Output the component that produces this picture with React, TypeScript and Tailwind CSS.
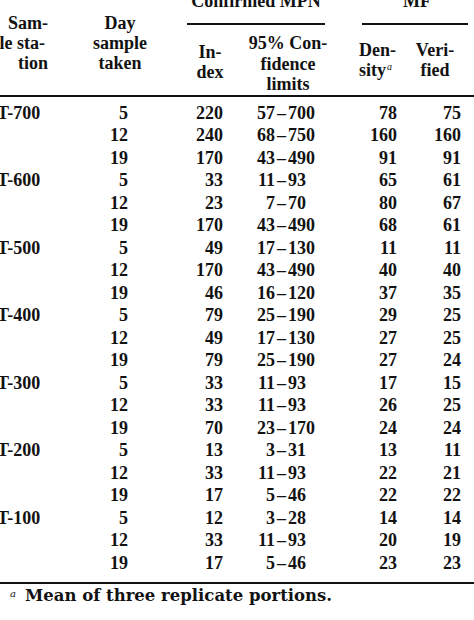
import React from "react";

type Row = [string, string, string, string, string, string, string];

const groups: { st: string; rows: [string, string, string, string, string, string][] }[] = [
  { st: "T-700", rows: [["5", "220", "57", "700", "78", "75"], ["12", "240", "68", "750", "160", "160"], ["19", "170", "43", "490", "91", "91"]] },
  { st: "T-600", rows: [["5", "33", "11", "93", "65", "61"], ["12", "23", "7", "70", "80", "67"], ["19", "170", "43", "490", "68", "61"]] },
  { st: "T-500", rows: [["5", "49", "17", "130", "11", "11"], ["12", "170", "43", "490", "40", "40"], ["19", "46", "16", "120", "37", "35"]] },
  { st: "T-400", rows: [["5", "79", "25", "190", "29", "25"], ["12", "49", "17", "130", "27", "25"], ["19", "79", "25", "190", "27", "24"]] },
  { st: "T-300", rows: [["5", "33", "11", "93", "17", "15"], ["12", "33", "11", "93", "26", "25"], ["19", "70", "23", "170", "24", "24"]] },
  { st: "T-200", rows: [["5", "13", "3", "31", "13", "11"], ["12", "33", "11", "93", "22", "21"], ["19", "17", "5", "46", "22", "22"]] },
  { st: "T-100", rows: [["5", "12", "3", "28", "14", "14"], ["12", "33", "11", "93", "20", "19"], ["19", "17", "5", "46", "23", "23"]] },
];

const rows: Row[] = groups.flatMap((g) =>
  g.rows.map((r, i) => [i === 0 ? g.st : "", ...r] as Row)
);

export default function App() {
  return (
    <div className="w-[474px] h-[620px] overflow-hidden bg-white text-[#121212] font-['Liberation_Serif',serif] font-bold text-[18px]">
      <div className="-mt-[9px] -ml-[12px] w-[486px]">
        {/* Header */}
        <div className="h-[106px] border-b-2 border-[#121212] flex items-start leading-[20px]">
          <div className="w-[72px] pt-[22px] pr-[12px] text-right">
            <div>Sam-</div>
            <div className="pr-[3px]">ple sta-</div>
            <div>tion</div>
          </div>
          <div className="w-[120px] pt-[22px] text-center">
            <div>Day</div>
            <div>sample</div>
            <div>taken</div>
          </div>
          <div className="w-[156px] flex flex-col">
            <div className="ml-[7px] mr-[11px] text-center whitespace-nowrap">Confirmed MPN</div>
            <div className="ml-[7px] mr-[11px] mt-[12px] h-[2px] bg-[#121212]" />
            <div className="flex">
              <div className="w-[60px] mt-[17px] text-center">
                <div>In-</div>
                <div>dex</div>
              </div>
              <div className="w-[96px] mt-[8px] text-center leading-[20.5px] whitespace-nowrap">
                <div>95% Con-</div>
                <div>fidence</div>
                <div>limits</div>
              </div>
            </div>
          </div>
          <div className="w-[138px] flex flex-col">
            <div className="ml-[26px] mr-[6px] pl-[4px] text-center">MF</div>
            <div className="ml-[26px] mr-[6px] mt-[12px] h-[2px] bg-[#121212]" />
            <div className="flex">
              <div className="w-[74px] mt-[15px] pl-[23px]">
                <div>Den-</div>
                <div>
                  sity
                  <sup className="italic font-normal text-[10px] ml-[1px] -top-[6px]">a</sup>
                </div>
              </div>
              <div className="w-[64px] mt-[15px] pr-[14px] text-center">
                <div>Veri-</div>
                <div>fied</div>
              </div>
            </div>
          </div>
        </div>

        {/* Body */}
        <div className="pt-[4.5px] pb-[8px] border-b-2 border-[#121212]">
          {rows.map((r, i) => (
            <div key={i} className="flex h-[22.5px] leading-[22.5px] whitespace-nowrap">
              <div className="w-[72px] pl-[9px]">{r[0]}</div>
              <div className="w-[120px] pr-[52px] text-right">{r[1]}</div>
              <div className="w-[60px] pr-[17px] text-right">{r[2]}</div>
              <div className="w-[96px] pl-[17px] flex">
                <span className="w-[18px] text-right">{r[3]}</span>
                <span className="mx-[2px]">–</span>
                <span>{r[4]}</span>
              </div>
              <div className="w-[74px] pr-[13px] text-right">{r[5]}</div>
              <div className="w-[64px] pr-[13px] text-right">{r[6]}</div>
            </div>
          ))}
        </div>

        {/* Footnote */}
        <div className="mt-[2px] pl-[22px] leading-[20px] flex items-start font-['DejaVu_Serif',serif] text-[16.5px] whitespace-nowrap">
          <span className="italic font-normal text-[10px] leading-[12px] mt-[2px] w-[15px]">a</span>
          <span>Mean of three replicate portions.</span>
        </div>
      </div>
    </div>
  );
}
